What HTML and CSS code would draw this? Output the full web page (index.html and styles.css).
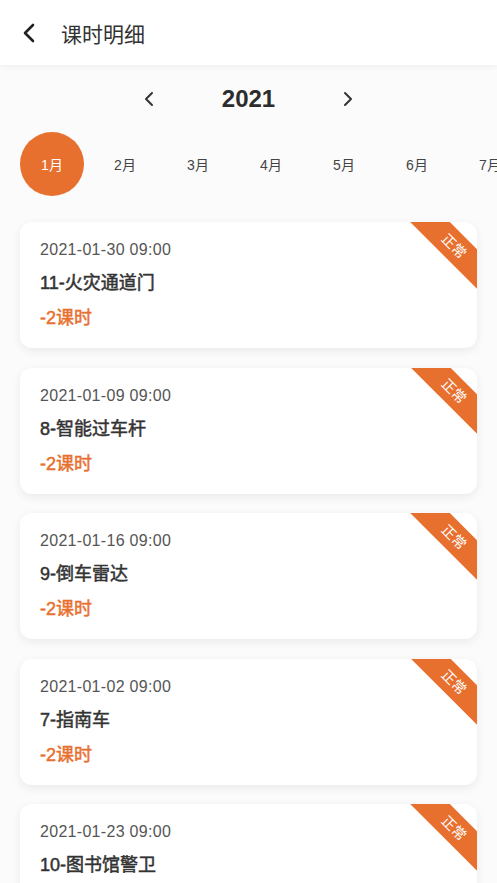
FILE: index.html
```html
<!DOCTYPE html>
<html lang="zh-CN">
  <head>
    <meta charset="UTF-8" />
    <meta name="viewport" content="width=device-width, initial-scale=1.0" />
    <title>课时明细</title>
    <link rel="stylesheet" href="styles.css">
  </head>
  <body>
    <header class="top-bar">
      <svg class="back-icon" width="14" height="20" viewBox="0 0 14 20">
        <path d="M11 2 L3 10 L11 18" fill="none" stroke="#222" stroke-width="2.6" stroke-linecap="round" stroke-linejoin="round" />
      </svg>
      <h1>课时明细</h1>
    </header>

    <div class="year-row">
      <svg class="year-arrow" width="10" height="16" viewBox="0 0 10 16">
        <path d="M8 2 L2 8 L8 14" fill="none" stroke="#333" stroke-width="2" stroke-linecap="round" stroke-linejoin="round" />
      </svg>
      <span class="year">2021</span>
      <svg class="year-arrow" width="10" height="16" viewBox="0 0 10 16">
        <path d="M2 2 L8 8 L2 14" fill="none" stroke="#333" stroke-width="2" stroke-linecap="round" stroke-linejoin="round" />
      </svg>
    </div>

    <div class="month-row">
      <div class="month active">1月</div>
      <div class="month">2月</div>
      <div class="month">3月</div>
      <div class="month">4月</div>
      <div class="month">5月</div>
      <div class="month">6月</div>
      <div class="month">7月</div>
    </div>

    <div class="record-list">
      <div class="record-card">
        <div class="ribbon">正常</div>
        <div class="record-time">2021-01-30 09:00</div>
        <div class="record-title">11-火灾通道门</div>
        <div class="record-hours">-2课时</div>
      </div>
      <div class="record-card">
        <div class="ribbon">正常</div>
        <div class="record-time">2021-01-09 09:00</div>
        <div class="record-title">8-智能过车杆</div>
        <div class="record-hours">-2课时</div>
      </div>
      <div class="record-card">
        <div class="ribbon">正常</div>
        <div class="record-time">2021-01-16 09:00</div>
        <div class="record-title">9-倒车雷达</div>
        <div class="record-hours">-2课时</div>
      </div>
      <div class="record-card">
        <div class="ribbon">正常</div>
        <div class="record-time">2021-01-02 09:00</div>
        <div class="record-title">7-指南车</div>
        <div class="record-hours">-2课时</div>
      </div>
      <div class="record-card">
        <div class="ribbon">正常</div>
        <div class="record-time">2021-01-23 09:00</div>
        <div class="record-title">10-图书馆警卫</div>
        <div class="record-hours">-2课时</div>
      </div>
    </div>
  </body>
</html>
```

FILE: styles.css
```css
/* Reset */
* {
  margin: 0;
  padding: 0;
  box-sizing: border-box;
}

body {
  font-family: 'Liberation Sans', 'Noto Sans CJK SC', sans-serif;
  background: #fbfbfb;
  color: #333;
  overflow: hidden;
}

.top-bar {
  height: 65px;
  background: #fff;
  display: flex;
  align-items: center;
  padding-left: 22px;
  box-shadow: 0 2px 6px rgba(0, 0, 0, 0.05);
}

.back-icon {
  margin-right: 25px;
}

.top-bar h1 {
  font-size: 21px;
  font-weight: 400;
  color: #333;
}

.year-row {
  display: flex;
  justify-content: center;
  align-items: center;
  gap: 68px;
  margin-top: 18px;
  height: 32px;
}

.year {
  font-size: 24px;
  font-weight: 700;
  color: #2c2c2c;
}

.month-row {
  display: flex;
  gap: 9px;
  padding-left: 20px;
  margin-top: 17px;
  overflow: hidden;
  white-space: nowrap;
}

.month {
  flex: 0 0 64px;
  height: 64px;
  border-radius: 50%;
  display: flex;
  justify-content: center;
  align-items: center;
  font-size: 14px;
  color: #444;
}

.month.active {
  background: #e8702f;
  color: #fff;
}

.record-list {
  margin-top: 26px;
  padding: 0 20px;
  display: flex;
  flex-direction: column;
  gap: 19.5px;
}

.record-card {
  position: relative;
  overflow: hidden;
  background: #fff;
  border-radius: 12px;
  padding: 18px 20px 17px;
  box-shadow: 0 3px 10px rgba(0, 0, 0, 0.07);
}

/* corner tag */
.ribbon {
  position: absolute;
  top: 9.5px;
  right: -26.5px;
  width: 100px;
  height: 28px;
  line-height: 28px;
  text-align: center;
  background: #e8702f;
  color: #fff;
  font-size: 14px;
  transform: rotate(45deg);
}

.record-time {
  font-size: 16px;
  line-height: 20px;
  letter-spacing: 0.3px;
  color: #555;
}

/* medium weight look */
.record-title {
  margin-top: 10px;
  font-size: 18px;
  line-height: 26px;
  color: #333;
  -webkit-text-stroke: 0.5px #333;
}

.record-hours {
  margin-top: 9px;
  font-size: 18px;
  line-height: 26px;
  color: #e8702f;
  -webkit-text-stroke: 0.5px #e8702f;
}
```
